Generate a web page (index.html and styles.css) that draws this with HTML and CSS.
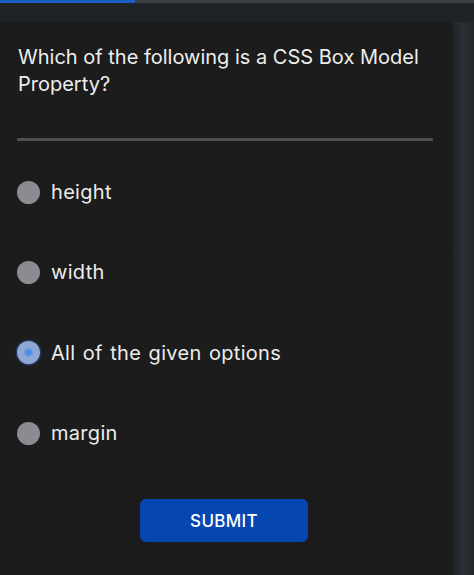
FILE: index.html
```html
<!DOCTYPE html>
<html lang="en">
<head>
<meta charset="utf-8">
<title>Quiz</title>
<link rel="stylesheet" href="styles.css">
</head>
<body>
<div class="progress"><div class="progress-fill"></div></div>
<div class="stage">
  <div class="card">
    <p class="question">Which of the following is a CSS Box Model Property?</p>
    <div class="divider"></div>
    <ul class="options">
      <li class="option"><span class="radio"></span><span class="label">height</span></li>
      <li class="option"><span class="radio"></span><span class="label">width</span></li>
      <li class="option"><span class="radio selected"></span><span class="label">All of the given options</span></li>
      <li class="option"><span class="radio"></span><span class="label">margin</span></li>
    </ul>
    <div class="actions"><button class="submit">SUBMIT</button></div>
  </div>
  <div class="side"></div>
</div>
</body>
</html>
```
FILE: styles.css
```css
* { box-sizing: border-box; }
html, body { margin: 0; padding: 0; }
body {
  width: 474px;
  height: 575px;
  overflow: hidden;
  background: #1f2226;
  font-family: Inter, "Noto Sans", sans-serif;
}
.progress {
  height: 3px;
  background: #3c3f43;
}
.progress-fill {
  width: 135px;
  height: 100%;
  background: #1d5fc0;
}
.stage {
  display: flex;
  padding-top: 19px;
  height: 572px;
}
.card {
  width: 453px;
  background: #1b1c1b;
  border-top-right-radius: 5px;
  padding: 22px 20px 0 17px;
}
.side {
  flex: 1;
  background: linear-gradient(90deg, #202427 0%, #2a2f34 45%, #22262a 100%);
}
.question {
  margin: 0 0 0 1px;
  color: #eeeeee;
  font-size: 20px;
  line-height: 27px;
  font-weight: 400;
  padding-right: 10px;
}
.divider {
  margin-top: 40px;
  height: 3px;
  background: #4a5053;
  border-radius: 1px;
}
.options {
  list-style: none;
  margin: 11px 0 0 0;
  padding: 0;
}
.option {
  height: 80.33px;
  display: flex;
  align-items: center;
  gap: 11px;
}
.radio {
  width: 23px;
  height: 23px;
  border-radius: 50%;
  background: #8b8b93;
  flex: none;
}
.radio.selected {
  background: radial-gradient(circle, #4a8ee8 0 2.5px, #8ea7d4 5px);
  box-shadow: 0 0 0 1.5px #23355a;
}
.label {
  color: #ececec;
  font-size: 20px;
  letter-spacing: 0.3px;
  word-spacing: 1.5px;
}
.actions {
  display: flex;
  padding-left: 123px;
  margin-top: 26px;
}
.submit {
  width: 168px;
  height: 43px;
  border: none;
  border-radius: 6px;
  background: #0546b0;
  color: #ffffff;
  font-family: Inter, "Noto Sans", sans-serif;
  font-size: 17px;
  font-weight: 500;
  letter-spacing: 0.3px;
}
```
